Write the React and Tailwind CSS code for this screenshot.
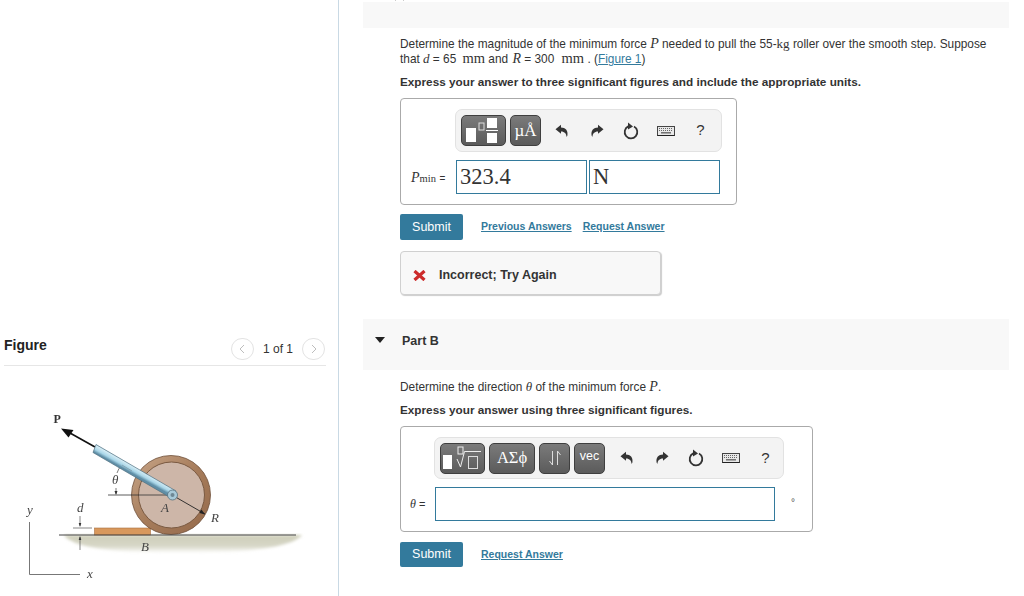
import { useId } from "react";

const serif = "font-['Liberation_Serif',serif]";

function UndoIcon() {
  return (
    <svg width="14" height="14" viewBox="0 0 14 14" className="text-[#333]">
      <path d="M0.5 5.2 L6 0.8 V3.4 C10.4 3.4 13.2 6.2 12.4 11.4 L11.6 13 C11.4 9.6 9.6 7.4 6 7.4 V9.8 Z" fill="currentColor" />
    </svg>
  );
}

function RedoIcon() {
  return (
    <svg width="14" height="14" viewBox="0 0 14 14" className="text-[#333]">
      <path d="M13.5 5.2 L8 0.8 V3.4 C3.6 3.4 0.8 6.2 1.6 11.4 L2.4 13 C2.6 9.6 4.4 7.4 8 7.4 V9.8 Z" fill="currentColor" />
    </svg>
  );
}

function ResetIcon() {
  return (
    <svg width="16" height="18" viewBox="0 0 16 18" fill="none" className="text-[#333]">
      <path d="M5.2 4.4 A6.3 6.3 0 1 0 11 4.5" stroke="currentColor" strokeWidth="1.8" />
      <path d="M5 0.6 L10 4.4 L5 7.6 Z" fill="currentColor" />
    </svg>
  );
}

function KeyboardIcon() {
  return (
    <svg width="18" height="10" viewBox="0 0 18 10">
      <rect x="0.5" y="0.5" width="17" height="9" fill="#e8e8e8" stroke="#444" />
      <path d="M2 2.5H16M2 4.5H16" stroke="#666" strokeWidth="1" strokeDasharray="1 1" />
      <path d="M4 6.8H14" stroke="#666" strokeWidth="1.4" />
      <path d="M0.5 9.5H17.5" stroke="#222" strokeWidth="1" />
    </svg>
  );
}

function ToolButton({ className = "", children }) {
  return (
    <div className={`flex h-[31px] items-center justify-center rounded-[5px] border border-[#3f3f3f] bg-gradient-to-b from-[#7b7b7b] to-[#5b5b5b] text-white ${className}`}>
      {children}
    </div>
  );
}

function TemplateGlyph() {
  return (
    <svg width="36" height="25" viewBox="0 0 36 25">
      <rect x="0" y="10" width="10" height="14" fill="#fff" />
      <rect x="13" y="5" width="5" height="7" fill="none" stroke="#ddd" />
      <rect x="21" y="0" width="10" height="10" fill="#fff" />
      <rect x="20" y="12" width="12" height="1" fill="#fff" />
      <rect x="21" y="15" width="10" height="10" fill="#fff" />
    </svg>
  );
}

function RootGlyph() {
  return (
    <svg width="39" height="25" viewBox="0 0 39 25">
      <rect x="0" y="9" width="9" height="14" fill="#fff" />
      <rect x="15" y="1" width="5" height="7" fill="none" stroke="#eee" />
      <path d="M14 13 L17.5 21 L21.5 5.5 H38" fill="none" stroke="#eee" />
      <rect x="25.5" y="10.5" width="9" height="12" fill="none" stroke="#ddd" />
    </svg>
  );
}

function ArrowsGlyph() {
  return (
    <svg width="14" height="16" viewBox="0 0 14 16" fill="none" stroke="#ddd" strokeWidth="1">
      <path d="M4.5 1 V15 L1.5 11" />
      <path d="M9.5 15 V1 L12.5 5" />
    </svg>
  );
}

function Toolbar({ className, tools, gap }) {
  return (
    <div className={`flex items-center rounded-[7px] border border-[#e2e2e2] bg-[#f3f3f3] ${className}`}>
      {tools}
      <div className={`flex items-center ${gap}`}>
        <div className="flex w-[35px] justify-center"><UndoIcon /></div>
        <div className="flex w-[35px] justify-center"><RedoIcon /></div>
        <div className="flex w-[34px] justify-center"><ResetIcon /></div>
        <div className="flex w-[35px] justify-center"><KeyboardIcon /></div>
        <div className="w-[35px] text-center font-['Liberation_Sans',sans-serif] text-[15px] text-[#333]">?</div>
      </div>
    </div>
  );
}

function Figure() {
  const id = useId();
  return (
    <svg width="339" height="230" viewBox="0 366 339 230" className="blur-[0.4px]">
      <defs>
        <linearGradient id={id + "rod"} gradientUnits="userSpaceOnUse" x1="136" y1="465" x2="131.5" y2="473">
          <stop offset="0" stopColor="#8fb9cc" />
          <stop offset="0.3" stopColor="#d4ecf5" />
          <stop offset="0.7" stopColor="#a9d6e8" />
          <stop offset="1" stopColor="#5f8ea6" />
        </linearGradient>
        <linearGradient id={id + "gr"} x1="0" y1="0" x2="0" y2="1">
          <stop offset="0" stopColor="#cfcfba" />
          <stop offset="0.6" stopColor="#d6d6c6" />
          <stop offset="1" stopColor="#d6d6c6" stopOpacity="0" />
        </linearGradient>
        <linearGradient id={id + "ring"} x1="0" y1="0" x2="1" y2="1">
          <stop offset="0" stopColor="#c9a78a" />
          <stop offset="0.5" stopColor="#a67c5b" />
          <stop offset="1" stopColor="#94694a" />
        </linearGradient>
        <filter id={id + "soft"}><feGaussianBlur stdDeviation="1.8" /></filter>
      </defs>
      {/* ground */}
      <path d="M64 535 H302 C292 547 250 553 180 553 C110 553 72 547 64 535 Z" fill={`url(#${id}gr)`} filter={`url(#${id}soft)`} />
      <rect x="94.5" y="528" width="56" height="7" fill="#d8985c" stroke="#a87040" strokeWidth="0.6" />
      {/* wheel */}
      <circle cx="171" cy="495" r="39.5" fill={`url(#${id}ring)`} stroke="#6e4f38" strokeWidth="0.8" />
      <circle cx="171.5" cy="495" r="33" fill="#cdb6a8" stroke="#7a5a42" strokeWidth="1" />
      <path d="M59 535 H296" stroke="#444" strokeWidth="1" />
      {/* theta reference */}
      <path d="M108 495 H172" stroke="#333" strokeWidth="0.8" />
      <path d="M116 488 V494 M122 465 Q118 469 117 473" stroke="#444" strokeWidth="0.7" fill="none" />
      <path d="M114.5 491 L116 495 L117.5 491 Z" fill="#333" />
      {/* radius */}
      <path d="M172 495 L205 514" stroke="#222" strokeWidth="0.9" />
      <path d="M205 514.5 L199.5 513 L201.5 509.5 Z" fill="#222" />
      {/* force */}
      <path d="M95 447 L70 433" stroke="#111" strokeWidth="1.6" />
      <path d="M61 428.5 L73.5 430 L68.5 437.5 Z" fill="#111" />
      {/* rod */}
      <path d="M96 444.5 L176 491 L172 498.5 L93 452.5 Z" fill={`url(#${id}rod)`} stroke="#4d6f80" strokeWidth="0.7" />
      <path d="M122 465 L132 471" stroke="#7d97a3" strokeWidth="0.7" />
      <circle cx="172.5" cy="495" r="5" fill="#a8c9d8" stroke="#55707d" strokeWidth="0.8" />
      <circle cx="172.5" cy="495" r="2" fill="#6e8794" />
      {/* step height */}
      <path d="M73 528 H92 M80 516 V526 M80 537 V550" stroke="#555" strokeWidth="0.7" />
      <path d="M78.7 523 L80 527 L81.3 523 Z M78.7 540 L80 536 L81.3 540 Z" fill="#333" />
      {/* axes */}
      <path d="M29.5 522 V574.5 H80" fill="none" stroke="#777" strokeWidth="1" />
      <g className={`${serif} fill-[#444] text-[13px] italic`}>
        <text x="27" y="514">y</text>
        <text x="87" y="578">x</text>
        <text x="77" y="512">d</text>
        <text x="112" y="484">θ</text>
        <text x="161" y="512">A</text>
        <text x="211" y="522">R</text>
        <text x="141" y="551">B</text>
      </g>
      <text x="53.5" y="423" className={`${serif} fill-[#333] text-[12px] font-bold`}>P</text>
    </svg>
  );
}

function PagerButton({ children }) {
  return (
    <div className="flex h-[22px] w-[23px] items-center justify-center rounded-full border border-[#e3e3e3] text-[#bbb]">
      {children}
    </div>
  );
}

function ChevronGlyph({ d }) {
  return (
    <svg width="8" height="10" viewBox="0 0 8 10" fill="none">
      <path d={d} stroke="#bdbdbd" strokeWidth="1" />
    </svg>
  );
}

export default function App() {
  return (
    <div className="flex h-[596px] w-[1024px] overflow-hidden bg-white font-['Liberation_Sans',sans-serif] text-[#333]">
      {/* Figure panel */}
      <div className="flex w-[339px] shrink-0 flex-col border-r border-[#c9d9e4] pt-[337px]">
        <div className="mx-[4px] mr-[12px] flex h-[29px] items-start justify-between border-b border-[#e6e6e6]">
          <span className="text-[14px] font-bold leading-[16px] text-[#222]">Figure</span>
          <div className="flex items-center gap-[9px] pr-[1px]">
            <PagerButton><ChevronGlyph d="M6 1 L2 5 L6 9" /></PagerButton>
            <span className="pt-[1px] text-[12px] leading-[22px] text-[#333]">1 of 1</span>
            <PagerButton><ChevronGlyph d="M2 1 L6 5 L2 9" /></PagerButton>
          </div>
        </div>
        <Figure />
      </div>

      {/* Question panel */}
      <div className="flex w-[685px] flex-col pl-[24px] pr-[15px]">
        <div className="flex h-[2px] shrink-0 gap-[7px] pl-[32px]">
          <span className="h-[1px] w-[1px] bg-[#ccc]" />
          <span className="h-[1px] w-[1px] bg-[#ccc]" />
        </div>
        <div className="h-[26px] shrink-0 bg-[#f8f8f8]" />
        <div className="flex flex-col pl-[37px]">
          <p className="mt-[9px] w-[600px] text-[11.85px] leading-[14px] text-[#333]">
            Determine the magnitude of the minimum force <span className={`${serif} text-[14px] italic`}>P</span> needed to pull the 55-<span className={`${serif} text-[13px]`}>kg</span> roller over the smooth step. Suppose
            <br />
            that <span className={`${serif} text-[13px] italic`}>d</span> = 65 <span className={`${serif} ml-[3px] text-[14.5px] leading-[14px]`}>mm</span> and <span className={`${serif} ml-[1px] text-[14px] italic`}>R</span> = 300 <span className={`${serif} ml-[4px] text-[14.5px] leading-[14px]`}>mm</span> . (<span className="text-[#337a9c] underline">Figure 1</span>)
          </p>
          <p className="mt-[9px] text-[11.75px] font-bold leading-[14px] text-[#333]">
            Express your answer to three significant figures and include the appropriate units.
          </p>

          {/* Part A answer */}
          <div className="mt-[9px] h-[107px] w-[337px] rounded-[4px] border border-[#aaa] pt-[10px]">
            <Toolbar
              className="ml-[54px] h-[43px] w-[267px] pl-[5px]"
              gap="ml-[3px]"
              tools={
                <div className="flex gap-[4px]">
                  <ToolButton className="w-[45px]"><TemplateGlyph /></ToolButton>
                  <ToolButton className={`w-[31px] text-[17px] text-[#d8d8d8] ${serif}`}>µÅ</ToolButton>
                </div>
              }
            />
            <div className="mt-[8px] flex items-center">
              <span className={`${serif} ml-[10px] w-[45px] text-[14px]`}>
                <i>P</i><span className="text-[10.5px]">min</span> <span className="font-['Liberation_Sans',sans-serif] text-[10px]">=</span>
              </span>
              <div className={`${serif} h-[34px] w-[131px] border border-[#337a9c] pl-[3px] text-[22.5px] leading-[32px]`}>323.4</div>
              <div className={`${serif} ml-[2px] h-[34px] w-[131px] border border-[#337a9c] pl-[3px] text-[22.5px] leading-[32px]`}>N</div>
            </div>
          </div>

          <div className="mt-[9px] flex items-center">
            <div className="flex h-[26px] w-[63px] items-center justify-center rounded-[2px] bg-[#337a9c] text-[12.5px] text-white">Submit</div>
            <span className="ml-[18px] text-[10.5px] font-bold text-[#337a9c] underline">Previous Answers</span>
            <span className="ml-[11px] text-[10.5px] font-bold text-[#337a9c] underline">Request Answer</span>
          </div>

          <div className="mt-[11px] flex h-[44px] w-[261px] items-center rounded-[4px] border border-[#d0d0d0] bg-[#f8f8f8] pl-[12px] pt-[4px] shadow-[1px_1px_1px_#ccc]">
            <svg width="13" height="11" viewBox="0 0 13 11">
              <path d="M1.5 1 L11.5 10 M11.5 1 L1.5 10" stroke="#cc2b2b" strokeWidth="3.2" />
            </svg>
            <span className="ml-[13px] text-[12.5px] font-bold text-[#333]">Incorrect; Try Again</span>
          </div>
        </div>

        {/* Part B */}
        <div className="mt-[24px] flex h-[51px] shrink-0 items-start bg-[#f8f8f8] pt-[15px]">
          <svg width="10" height="6" viewBox="0 0 10 6" className="ml-[12px] mt-[3px]">
            <path d="M0 0 H10 L5 6 Z" fill="#222" />
          </svg>
          <span className="ml-[17px] text-[12.5px] font-bold leading-[14px] text-[#333]">Part B</span>
        </div>
        <div className="flex flex-col pl-[37px]">
          <p className="mt-[10px] text-[11.85px] leading-[14px] text-[#333]">
            Determine the direction <span className={`${serif} text-[13px] italic`}>θ</span> of the minimum force <span className={`${serif} text-[14px] italic`}>P</span>.
          </p>
          <p className="mt-[9px] text-[11.75px] font-bold leading-[14px] text-[#333]">
            Express your answer using three significant figures.
          </p>

          <div className="mt-[9px] h-[106px] w-[413px] rounded-[4px] border border-[#aaa] pt-[10px]">
            <Toolbar
              className="ml-[33px] h-[42px] w-[350px] pl-[5px]"
              gap="ml-[4px]"
              tools={
                <div className="flex gap-[4px]">
                  <ToolButton className="w-[45px]"><RootGlyph /></ToolButton>
                  <ToolButton className={`w-[46px] text-[16.5px] text-[#e4e4e4] ${serif}`}>ΑΣϕ</ToolButton>
                  <ToolButton className="w-[31px]"><ArrowsGlyph /></ToolButton>
                  <ToolButton className="w-[31px] items-start pt-[4px] text-[12.5px] leading-[16px]">vec</ToolButton>
                </div>
              }
            />
            <div className="mt-[8px] flex items-center">
              <span className={`${serif} ml-[9px] w-[25px] text-[12px]`}>
                <i>θ</i> <span className="font-['Liberation_Sans',sans-serif] text-[11px]">=</span>
              </span>
              <div className="h-[34px] w-[340px] border border-[#337a9c]" />
              <span className="ml-[16px] -mt-[4px] text-[10px] text-[#555]">°</span>
            </div>
          </div>

          <div className="mt-[10px] flex items-center">
            <div className="flex h-[25px] w-[63px] items-center justify-center rounded-[2px] bg-[#337a9c] text-[12.5px] text-white">Submit</div>
            <span className="ml-[18px] text-[10.5px] font-bold text-[#337a9c] underline">Request Answer</span>
          </div>
        </div>
      </div>
    </div>
  );
}
